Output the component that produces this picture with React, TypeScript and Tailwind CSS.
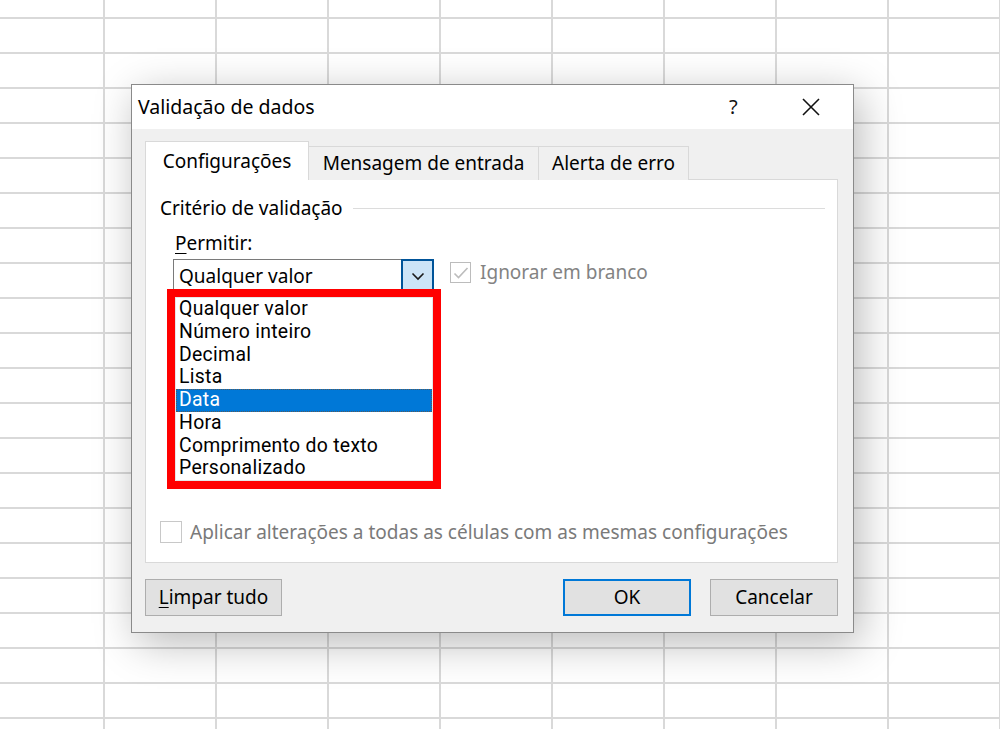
import React from 'react';

const font = "font-['Noto_Sans','Open_Sans',sans-serif]";

const options = [
    'Qualquer valor',
    'Número inteiro',
    'Decimal',
    'Lista',
    'Data',
    'Hora',
    'Comprimento do texto',
    'Personalizado',
];

const CloseIcon = () => (
    <svg width="20" height="20" viewBox="0 0 20 20" fill="none" stroke="#111" strokeWidth="1.6">
        <path d="M2 2 L18 18 M18 2 L2 18" />
    </svg>
);

const Chevron = () => (
    <svg width="14" height="9" viewBox="0 0 14 9" fill="none" stroke="#1a1a1a" strokeWidth="1.6">
        <path d="M1.5 1.5 L7 7 L12.5 1.5" />
    </svg>
);

const Check = ({ color }: { color: string }) => (
    <svg width="16" height="14" viewBox="0 0 16 14" fill="none" stroke={color} strokeWidth="1.6">
        <path d="M1.5 7.5 L5.5 11.5 L14.5 2" />
    </svg>
);

const Button: React.FC<{ label: React.ReactNode; primary?: boolean; className?: string }> = ({ label, primary, className }) => (
    <button
        className={`h-[37px] bg-[#e1e1e1] text-[19px] text-black flex items-center justify-center ${
            primary ? 'border-2 border-[#0078d7]' : 'border border-[#adadad]'
        } ${className ?? ''}`}
    >
        {label}
    </button>
);

export default function App() {
    return (
        <div
            className={`relative w-[1000px] h-[729px] overflow-hidden bg-white ${font} bg-[linear-gradient(to_right,#d9d9d9_2px,transparent_2px),linear-gradient(to_bottom,#d9d9d9_2px,transparent_2px)] bg-[size:112px_35px] bg-[position:103px_52px]`}
        >
            {/* Dialog window */}
            <div className="absolute left-[131px] top-[84px] w-[723px] h-[549px] flex flex-col bg-[#f0f0f0] border border-[#8a8a8a] shadow-[6px_10px_40px_rgba(0,0,0,0.28)]">
                {/* Title bar */}
                <div className="h-[44px] bg-white flex items-center pl-[6px] shrink-0">
                    <span className="text-[19.5px] text-black flex-1 leading-none">Validação de dados</span>
                    <span className="text-[20px] text-[#111] w-[20px] mr-[52px] leading-none">?</span>
                    <div className="mr-[32px] flex items-center">
                        <CloseIcon />
                    </div>
                </div>

                {/* Body */}
                <div className="flex-1 flex flex-col pt-[12px] pl-[13px] pr-[15px] pb-[15px]">
                    {/* Tabs */}
                    <div className="flex items-end h-[39px] relative z-10">
                        <div className="w-[164px] h-[39px] bg-white border border-b-0 border-[#d9d9d9] flex items-center justify-center text-[19px] text-black">
                            Configurações
                        </div>
                        <div className="w-[230px] h-[34px] bg-[#f0f0f0] border border-l-0 border-b-0 border-[#d9d9d9] flex items-center justify-center text-[19px] text-black">
                            Mensagem de entrada
                        </div>
                        <div className="w-[150px] h-[34px] bg-[#f0f0f0] border border-l-0 border-b-0 border-[#d9d9d9] flex items-center justify-center text-[19px] text-black">
                            Alerta de erro
                        </div>
                    </div>

                    {/* Panel */}
                    <div className="relative h-[384px] -mt-px bg-white border border-[#d9d9d9] flex flex-col pl-[14px] pr-[12px] pt-[15px]">
                        <div className="flex items-center gap-[10px] h-[26px]">
                            <span className="text-[19px] text-black">Critério de validação</span>
                            <div className="flex-1 h-px bg-[#dcdcdc]" />
                        </div>

                        <div className="pl-[15px] mt-[9px] text-[19px] text-black h-[26px] flex items-center">
                            <span>
                                <span className="underline underline-offset-[3px]">P</span>ermitir:
                            </span>
                        </div>

                        <div className="flex items-start mt-[3px] pl-[13px]">
                            <div className="w-[261px] h-[34px] bg-white border border-[#7a7a7a] flex items-center">
                                <span className="flex-1 pl-[5px] text-[19px] text-black">Qualquer valor</span>
                                <div className="w-[33px] h-[34px] -mr-px -my-px bg-[#cce4f7] border-2 border-[#005499] flex items-center justify-center">
                                    <Chevron />
                                </div>
                            </div>
                            <div className="ml-[16px] mt-[3px] flex items-center gap-[9px]">
                                <div className="w-[21px] h-[21px] border border-[#bcbcbc] bg-white flex items-center justify-center">
                                    <Check color="#bcbcbc" />
                                </div>
                                <span className="text-[19px] text-[#838383] leading-[21px]">Ignorar em branco</span>
                            </div>
                        </div>

                        <div className="flex-1" />

                        <div className="flex items-center gap-[8px] mb-[16px]">
                            <div className="w-[22px] h-[22px] border border-[#c8c8c8] bg-white" />
                            <span className="text-[19px] text-[#7a7a7a]">Aplicar alterações a todas as células com as mesmas configurações</span>
                        </div>

                        {/* Open dropdown list, highlighted with a red frame */}
                        <div className="absolute left-[21px] top-[109px] w-[274px] border-[8px] border-[#ff0000] bg-white">
                            <div className="border border-[#e6e6e6]">
                                {options.map((opt) => (
                                    <div
                                        key={opt}
                                        className={`h-[22.75px] pl-[3px] flex items-center font-['Roboto','Noto_Sans',sans-serif] text-[19.4px] tracking-[0.3px] leading-[22.75px] ${
                                            opt === 'Data'
                                                ? 'bg-[#0078d7] text-white outline outline-1 outline-dotted outline-[#5a5a5a] -outline-offset-1'
                                                : 'text-black'
                                        }`}
                                    >
                                        {opt}
                                    </div>
                                ))}
                            </div>
                        </div>
                    </div>

                    {/* Buttons */}
                    <div className="flex items-center mt-[16px]">
                        <Button
                            className="w-[137px]"
                            label={
                                <span>
                                    <span className="underline underline-offset-[3px]">L</span>impar tudo
                                </span>
                            }
                        />
                        <div className="flex-1" />
                        <Button className="w-[128px]" label="OK" primary />
                        <Button className="w-[128px] ml-[19px]" label="Cancelar" />
                    </div>
                </div>
            </div>
        </div>
    );
}
